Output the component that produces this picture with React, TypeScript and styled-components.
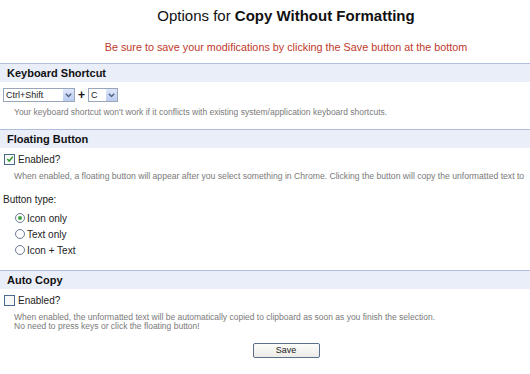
import React from 'react'
import styled, { createGlobalStyle } from 'styled-components'

const Global = createGlobalStyle`
  html, body { margin: 0; padding: 0; overflow: hidden; background: #fff; }
  body { font-family: "Liberation Sans", Arial, sans-serif; color: #222; }
`

const Page = styled.div`
  width: 572px;
  padding-top: 7px;
`

const Title = styled.h1`
  margin: 0;
  text-align: center;
  font-size: 15px;
  font-weight: normal;
  line-height: 18px;
  color: #111;
  b { font-weight: bold; }
`

const Warning = styled.p`
  margin: 16px 0 0;
  text-align: center;
  font-size: 10.8px;
  line-height: 13px;
  color: #c0392b;
`

const Section = styled.section<{ $gap: number }>`
  margin-top: ${p => p.$gap}px;
`

const SectionHead = styled.h2`
  margin: 0;
  border-top: 1px solid #aebde0;
  background: #e9eef8;
  height: 18px;
  line-height: 18px;
  padding-left: 7px;
  font-size: 11px;
  font-weight: bold;
  color: #111;
`

const Body = styled.div`
  padding: 4px 0 0 3px;
`

const ShortcutRow = styled.div`
  display: flex;
  align-items: center;
  gap: 3px;
  height: 14px;
  margin-top: 2px;
`

const SelectBox = styled.div<{ $w: number }>`
  width: ${p => p.$w}px;
  height: 14px;
  box-sizing: border-box;
  border: 1px solid #9aa7bb;
  background: #fff;
  display: flex;
  align-items: center;
  justify-content: space-between;
  font-size: 9px;
  color: #222;
  padding-left: 2px;
`

const Arrow = styled.span`
  width: 11px;
  height: 12px;
  background: linear-gradient(#dfe8fa, #b9cbef);
  display: flex;
  align-items: center;
  justify-content: center;
`

const Plus = styled.span`
  font-size: 12px;
  font-weight: bold;
  color: #111;
`

const Hint = styled.p<{ $top?: number; $size?: number }>`
  margin: ${p => p.$top ?? 6}px 0 0 11px;
  font-size: ${p => p.$size ?? 8.5}px;
  line-height: 9px;
  color: #7a7a7a;
  white-space: nowrap;
`

const CheckRow = styled.label`
  display: flex;
  align-items: center;
  gap: 3px;
  font-size: 10px;
  color: #222;
  height: 14px;
`

const Box = styled.span`
  width: 9px;
  height: 9px;
  margin-left: 1px;
  border: 1px solid #4a6a90;
  background: #f8f8f8;
  display: inline-flex;
  align-items: center;
  justify-content: center;
`

const FieldLabel = styled.div`
  margin-top: 12px;
  font-size: 10px;
  line-height: 14px;
  color: #222;
`

const RadioList = styled.div`
  margin: 3px 0 0 12px;
  display: flex;
  flex-direction: column;
`

const RadioRow = styled.label`
  display: flex;
  align-items: center;
  gap: 2px;
  height: 16px;
  font-size: 10px;
  color: #222;
`

const RadioDot = styled.span<{ $on?: boolean }>`
  width: 8px;
  height: 8px;
  border-radius: 50%;
  border: 1px solid #6d7f95;
  background: #fbfbfb;
  display: inline-flex;
  align-items: center;
  justify-content: center;
  &::after {
    content: '';
    width: 4px;
    height: 4px;
    border-radius: 50%;
    background: ${p => (p.$on ? '#3fa33f' : 'transparent')};
  }
`

const Footer = styled.div`
  display: flex;
  justify-content: center;
  margin-top: 12px;
`

const SaveButton = styled.button`
  width: 67px;
  height: 15px;
  box-sizing: border-box;
  border: 1px solid #5a6f8c;
  border-radius: 2px;
  background: linear-gradient(#fdfdfb, #ecebe6);
  font-family: inherit;
  font-size: 9px;
  line-height: 13px;
  color: #222;
  padding: 0;
`

function Chevron() {
  return (
    <svg width="7" height="5" viewBox="0 0 7 5">
      <path d="M0.8 0.8 L3.5 3.6 L6.2 0.8" fill="none" stroke="#4d6185" strokeWidth="1.4" />
    </svg>
  )
}

function Tick() {
  return (
    <svg width="8" height="8" viewBox="0 0 8 8">
      <path d="M1.3 4 L3.2 6 L6.8 1.6" fill="none" stroke="#2f9a2f" strokeWidth="1.5" />
    </svg>
  )
}

function Select({ value, width }: { value: string; width: number }) {
  return (
    <SelectBox $w={width}>
      <span>{value}</span>
      <Arrow><Chevron /></Arrow>
    </SelectBox>
  )
}

export default function App() {
  return (
    <Page>
      <Global />
      <Title>Options for <b>Copy Without Formatting</b></Title>
      <Warning>Be sure to save your modifications by clicking the Save button at the bottom</Warning>

      <Section $gap={9}>
        <SectionHead>Keyboard Shortcut</SectionHead>
        <Body>
          <ShortcutRow>
            <Select value="Ctrl+Shift" width={72} />
            <Plus>+</Plus>
            <Select value="C" width={30} />
          </ShortcutRow>
          <Hint>Your keyboard shortcut won't work if it conflicts with existing system/application keyboard shortcuts.</Hint>
        </Body>
      </Section>

      <Section $gap={12}>
        <SectionHead>Floating Button</SectionHead>
        <Body>
          <CheckRow><Box><Tick /></Box>Enabled?</CheckRow>
          <Hint $size={8.65}>When enabled, a floating button will appear after you select something in Chrome. Clicking the button will copy the unformatted text to</Hint>
          <FieldLabel>Button type:</FieldLabel>
          <RadioList>
            <RadioRow><RadioDot $on />Icon only</RadioRow>
            <RadioRow><RadioDot />Text only</RadioRow>
            <RadioRow><RadioDot />Icon + Text</RadioRow>
          </RadioList>
        </Body>
      </Section>

      <Section $gap={12}>
        <SectionHead>Auto Copy</SectionHead>
        <Body>
          <CheckRow><Box />Enabled?</CheckRow>
          <Hint>
            When enabled, the unformatted text will be automatically copied to clipboard as soon as you finish the selection.
            <br />
            No need to press keys or click the floating button!
          </Hint>
        </Body>
      </Section>

      <Footer>
        <SaveButton>Save</SaveButton>
      </Footer>
    </Page>
  )
}
